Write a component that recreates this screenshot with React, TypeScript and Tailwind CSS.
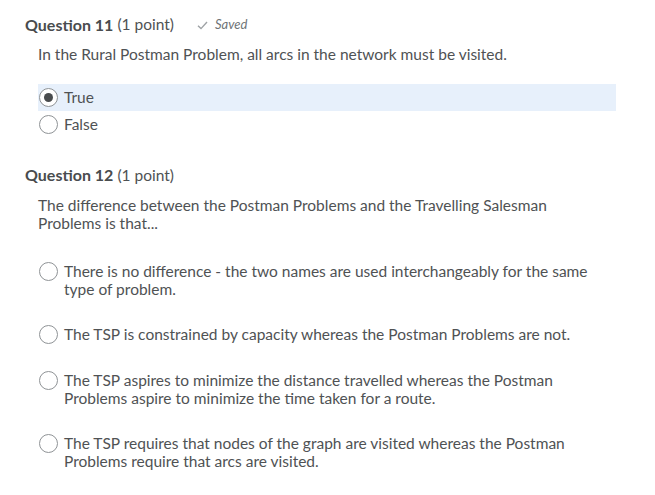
import React from "react";

function Radio({ checked }: { checked?: boolean }) {
  return (
    <span className="flex h-[19px] w-[19px] shrink-0 items-center justify-center rounded-full border border-[#8f9396] bg-white">
      {checked && <span className="h-[9px] w-[9px] rounded-full bg-[#494c4e]" />}
    </span>
  );
}

function Option({ text }: { text: React.ReactNode }) {
  return (
    <div className="flex items-start gap-[6px]">
      <Radio />
      <div className="leading-[18px]">{text}</div>
    </div>
  );
}

export default function App() {
  return (
    <div
      className="h-[495px] w-[655px] bg-white text-[15.5px] text-[#4f5254]"
      style={{ fontFamily: "Lato, 'Noto Sans', sans-serif" }}
    >
      <div className="pl-[25px] pt-[13px]">
        <div className="flex items-center">
          <span className="text-[16px] font-bold text-[#494c4e]">Question 11</span>
          <span className="ml-[4px]">(1 point)</span>
          <span className="ml-[23px] flex items-center gap-[7px] text-[13px] italic text-[#6e7376]">
            <svg width="11" height="9" viewBox="0 0 11 9" fill="none">
              <path d="M1 4.8L4 7.6L10 1" stroke="#9ea2a5" strokeWidth="1.4" />
            </svg>
            Saved
          </span>
        </div>
        <div className="pl-[13px] pt-[6px]">In the Rural Postman Problem, all arcs in the network must be visited.</div>
        <div className="mt-[18px] mr-[39px] ml-[13px]">
          <div className="flex h-[27px] items-center gap-[6px] bg-[#e7f0fb] pl-[1px]">
            <Radio checked />
            <span>True</span>
          </div>
          <div className="flex h-[27px] items-center gap-[6px] pl-[1px]">
            <Radio />
            <span>False</span>
          </div>
        </div>
        <div className="mt-[25px] flex items-center">
          <span className="text-[16px] font-bold text-[#494c4e]">Question 12</span>
          <span className="ml-[4px]">(1 point)</span>
        </div>
        <div className="pl-[13px] pt-[9px] leading-[18px]">
          The difference between the Postman Problems and the Travelling Salesman
          <br />
          Problems is that...
        </div>
        <div className="ml-[14px] mt-[30px] flex flex-col gap-[27px]">
          <Option
            text={
              <>
                There is no difference - the two names are used interchangeably for the same
                <br />
                type of problem.
              </>
            }
          />
          <Option text="The TSP is constrained by capacity whereas the Postman Problems are not." />
          <Option
            text={
              <>
                The TSP aspires to minimize the distance travelled whereas the Postman
                <br />
                Problems aspire to minimize the time taken for a route.
              </>
            }
          />
          <Option
            text={
              <>
                The TSP requires that nodes of the graph are visited whereas the Postman
                <br />
                Problems require that arcs are visited.
              </>
            }
          />
        </div>
      </div>
    </div>
  );
}
